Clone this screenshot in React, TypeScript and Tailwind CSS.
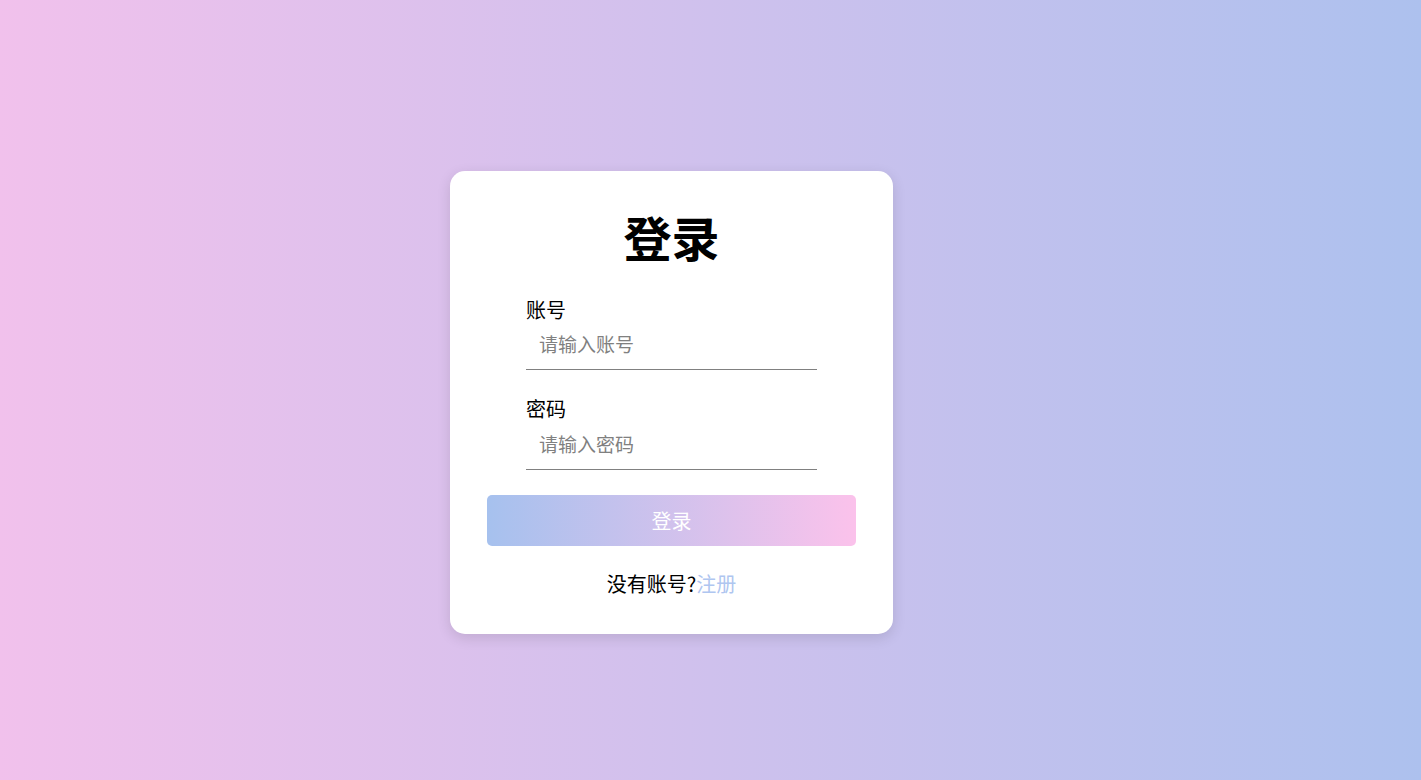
import React from "react";

export default function App() {
  const font = { fontFamily: '"Noto Sans CJK SC", "Noto Sans", sans-serif' };
  return (
    <div
      className="w-full h-[780px] flex items-center justify-center pr-[78px] pt-[25px] bg-[linear-gradient(to_right,#f1c1ec,#adc1ee)]"
      style={font}
    >
      <div className="w-[443px] h-[463px] shrink-0 bg-white rounded-[15px] shadow-[0_4px_14px_rgba(0,0,0,0.12)] flex flex-col items-center pt-[35px]">
        <h1 className="text-[48px] leading-[60px] font-bold text-black">登录</h1>
        <div className="w-[291px] mt-[32px] flex flex-col">
          <label className="text-[20px] leading-[24px] text-black">账号</label>
          <input
            className="h-[48px] border-b border-[#808080] pl-[13px] pb-[4px] text-[19px] outline-none placeholder:text-[#808080]"
            placeholder="请输入账号"
          />
          <label className="text-[20px] leading-[24px] text-black mt-[27px]">密码</label>
          <input
            type="password"
            className="h-[49px] border-b border-[#808080] pl-[13px] pb-[4px] text-[19px] outline-none placeholder:text-[#808080]"
            placeholder="请输入密码"
          />
        </div>
        <button className="mt-[25px] w-[369px] h-[51px] rounded-[5px] bg-[linear-gradient(to_right,#a6c1ee,#fbc2eb)] text-white text-[20px]">
          登录
        </button>
        <div className="mt-[26px] text-[20px] leading-[24px] text-black">
          没有账号?<a className="text-[#afc6f0]">注册</a>
        </div>
      </div>
    </div>
  );
}
